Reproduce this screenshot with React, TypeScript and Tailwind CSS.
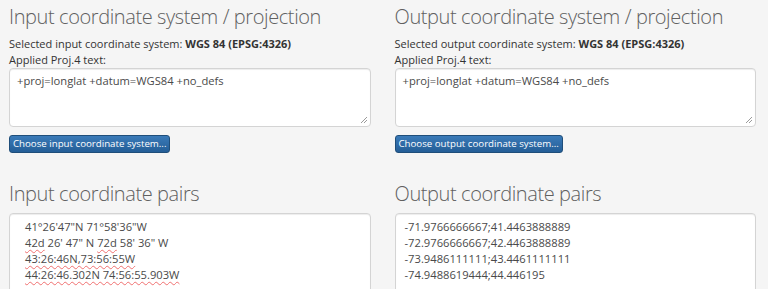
import React from "react";

const font = { fontFamily: '"Open Sans", "Noto Sans", sans-serif' };

function Resize() {
  return (
    <svg className="absolute right-[2px] bottom-[2px]" width="9" height="9" viewBox="0 0 9 9">
      <path d="M8 2 L2 8 M8 5 L5 8" stroke="#9a9a9a" strokeWidth="1" />
    </svg>
  );
}

const heading = "text-[20px] font-light leading-[23px] tracking-[-0.4px] text-[#606060]";
const box =
  "bg-white border border-[#d4d4d4] rounded-[4px] shadow-[inset_0_1px_1px_rgba(0,0,0,0.075)] text-[11.2px] leading-[16px] text-[#4a4a4a]";

function ProjectionPanel({ side }: { side: "input" | "output" }) {
  const label = side === "input" ? "Input" : "Output";
  return (
    <div>
      <h2 className={`${heading} mt-[5px]`}>{label} coordinate system / projection</h2>
      <div className="mt-[8px] text-[11px] leading-[16px] text-[#333]">
        Selected {side} coordinate system: <b className="font-bold">WGS 84 (EPSG:4326)</b>
      </div>
      <div className="text-[11px] leading-[16px] text-[#333]">Applied Proj.4 text:</div>
      <div className={`${box} relative h-[59px] px-[7px] py-[4px]`}>
        +proj=longlat +datum=WGS84 +no_defs
        <Resize />
      </div>
      <button className="mt-[8px] h-[18px] px-[3px] rounded-[3px] border border-[#1f4e7a] bg-gradient-to-b from-[#3a7ab8] to-[#245e97] text-white text-[9.7px] leading-[16px]">
        Choose {side} coordinate system...
      </button>
    </div>
  );
}

const squiggle = "underline decoration-wavy decoration-[#f07070] decoration-[0.5px] underline-offset-[2px]";

export default function App() {
  return (
    <div className="w-[768px] h-[289px] overflow-hidden bg-[#f5f5f5] pl-[9px] pr-[12px]" style={font}>
      <div className="grid grid-cols-2 gap-x-[24px]">
        <ProjectionPanel side="input" />
        <ProjectionPanel side="output" />

        <div>
          <h2 className={`${heading} mt-[29px]`}>Input coordinate pairs</h2>
          <div className={`${box} mt-[8px] h-[90px] pl-[15px] pt-[5px]`}>
            <div>41°26'47"N 71°58'36"W</div>
            <div>
              <span className={squiggle}>42d</span> 26' 47" N <span className={squiggle}>72d</span> 58' 36" W
            </div>
            <div>
              <span className={squiggle}>43:26:46N,73:56:55W</span>
            </div>
            <div>
              <span className={squiggle}>44:26:46.302N 74:56:55.903W</span>
            </div>
          </div>
        </div>

        <div>
          <h2 className={`${heading} mt-[29px]`}>Output coordinate pairs</h2>
          <div className={`${box} mt-[8px] h-[90px] pl-[9px] pt-[5px]`}>
            <div>-71.9766666667;41.4463888889</div>
            <div>-72.9766666667;42.4463888889</div>
            <div>-73.9486111111;43.4461111111</div>
            <div>-74.9488619444;44.446195</div>
          </div>
        </div>
      </div>
    </div>
  );
}
